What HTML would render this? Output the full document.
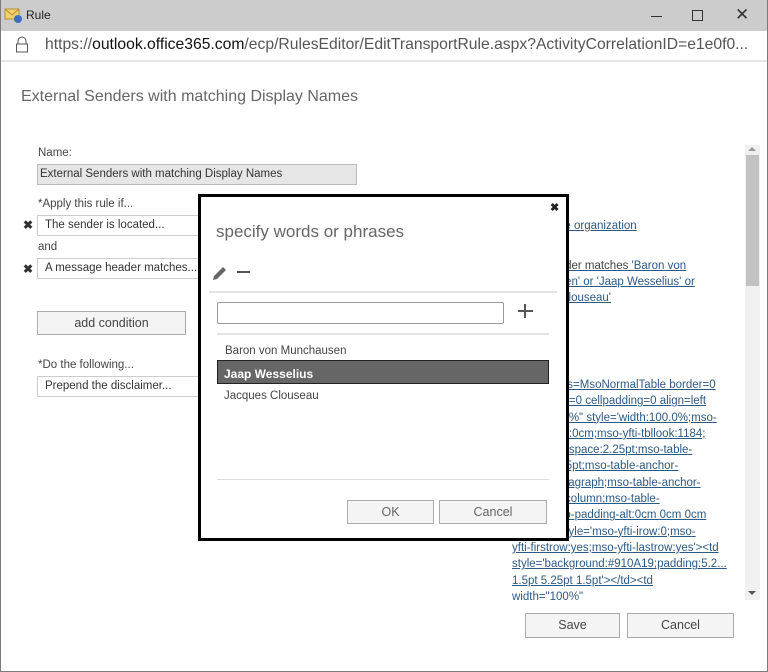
<!DOCTYPE html>
<html><head><meta charset="utf-8"><style>
*{margin:0;padding:0;box-sizing:border-box}
body{width:768px;height:672px;overflow:hidden;background:#fff;font-family:"Liberation Sans",sans-serif;position:relative}
.a{position:absolute}
.win{left:0;top:0;width:768px;height:672px;border:1px solid #7a7a7a;border-top:none}
.tb{left:0;top:0;width:768px;height:31px;background:#cccccc}
.lbl{font-size:11.5px;color:#444}
.box{border:1px solid #ccc;background:#fff;font-size:11.5px;color:#333;padding-left:7px;line-height:19px;height:21px}
.btn{border:1px solid #aaa;background:#f4f4f4;font-size:12.5px;color:#444;text-align:center}
.lnk{font-size:11.5px;color:#2d5985;text-decoration:underline;white-space:nowrap;line-height:16.3px}
.sep{height:2px;background:#e4e4e4}
</style></head><body>
<div class="a tb"></div>
<svg class="a" style="left:4px;top:6px" width="20" height="18" viewBox="0 0 20 18"><rect x="1" y="3" width="14" height="10" fill="#f0d070" stroke="#b89030"/><path d="M1 3l7 6 7-6" fill="none" stroke="#b89030"/><circle cx="14" cy="13" r="4" fill="#3a6fc0"/></svg>
<div class="a" style="left:26px;top:8px;font-size:12px;color:#222">Rule</div>
<div class="a" style="left:651px;top:16px;width:11px;height:1px;background:#333"></div>
<div class="a" style="left:692px;top:10px;width:11px;height:11px;border:1px solid #333"></div>
<div class="a" style="left:735px;top:5px;font-size:17px;color:#333">✕</div>
<svg class="a" style="left:15px;top:36px" width="14" height="18" viewBox="0 0 14 18"><path d="M3 8V5a4 4 0 0 1 8 0v3" fill="none" stroke="#555"/><rect x="1.5" y="8" width="11" height="8" fill="none" stroke="#555"/></svg>
<div class="a" style="left:45px;top:36px;font-size:15.7px;color:#555;white-space:nowrap">https://<span style="color:#111">outlook.office365.com</span>/ecp/RulesEditor/EditTransportRule.aspx?ActivityCorrelationID=e1e0f0...</div>
<div class="a" style="left:0;top:60px;width:768px;height:2px;background:#e6e6e6"></div>
<div class="a" style="left:21px;top:88px;font-size:16px;color:#666">External Senders with matching Display Names</div>
<div class="a lbl" style="left:38px;top:147px">Name:</div>
<div class="a box" style="left:37px;top:164px;width:320px;background:#e6e6e6;border-color:#bbb;padding-left:2px">External Senders with matching Display Names</div>
<div class="a lbl" style="left:38px;top:198px">*Apply this rule if...</div>
<div class="a" style="left:23px;top:218px;font-size:12px;font-weight:bold;color:#333">✖</div>
<div class="a box" style="left:37px;top:215px;width:200px">The sender is located...</div>
<div class="a lbl" style="left:38px;top:241px">and</div>
<div class="a" style="left:23px;top:262px;font-size:12px;font-weight:bold;color:#333">✖</div>
<div class="a box" style="left:37px;top:258px;width:200px">A message header matches...</div>
<div class="a btn" style="left:37px;top:311px;width:149px;height:24px;line-height:22px">add condition</div>
<div class="a lbl" style="left:38px;top:359px">*Do the following...</div>
<div class="a box" style="left:37px;top:376px;width:200px">Prepend the disclaimer...</div>
<div class="a lnk" style="left:512px;top:218px">Outside the organization</div>
<div class="a lnk" style="left:512px;top:258px"><span style="color:#444;text-decoration:none">ssage header matches </span>'Baron von</div>
<div class="a lnk" style="left:512px;top:274px">Munchausen' or 'Jaap Wesselius' or</div>
<div class="a lnk" style="left:512px;top:290px">'Jacques Clouseau'</div>
<div class="a" style="left:512px;top:377px;width:232px;height:223px;overflow:hidden">
<div class="lnk">&lt;table class=MsoNormalTable border=0</div>
<div class="lnk">cellspacing=0 cellpadding=0 align=left</div>
<div class="lnk">width="100%" style='width:100.0%;mso-</div>
<div class="lnk">cellspacing:0cm;mso-yfti-tbllook:1184;</div>
<div class="lnk">mso-table-lspace:2.25pt;mso-table-</div>
<div class="lnk">rspace:2.25pt;mso-table-anchor-</div>
<div class="lnk">vertical:paragraph;mso-table-anchor-</div>
<div class="lnk">horizontal:column;mso-table-</div>
<div class="lnk">left:left;mso-padding-alt:0cm 0cm 0cm</div>
<div class="lnk">0cm'&gt;&lt;tr style='mso-yfti-irow:0;mso-</div>
<div class="lnk">yfti-firstrow:yes;mso-yfti-lastrow:yes'&gt;&lt;td</div>
<div class="lnk">style='background:#910A19;padding:5.2...</div>
<div class="lnk">1.5pt 5.25pt 1.5pt'&gt;&lt;/td&gt;&lt;td</div>
<div class="lnk">width="100%"</div>
<div class="lnk">style='width:100.0%;background:#FDF2...</div>
</div>
<div class="a" style="left:745px;top:145px;width:15px;height:455px;background:#f0f0f0"></div>
<div class="a" style="left:746px;top:155px;width:13px;height:131px;background:#c2c2c2"></div>
<div class="a" style="left:748px;top:147px;width:0;height:0;border-left:4px solid transparent;border-right:4px solid transparent;border-bottom:4px solid #999"></div>
<div class="a" style="left:748px;top:591px;width:0;height:0;border-left:4px solid transparent;border-right:4px solid transparent;border-top:4px solid #555"></div>
<div class="a btn" style="left:525px;top:613px;width:95px;height:25px;line-height:23px">Save</div>
<div class="a btn" style="left:627px;top:613px;width:107px;height:25px;line-height:23px">Cancel</div>
<!-- dialog -->
<div class="a" style="left:198px;top:194px;width:371px;height:347px;border:3px solid #000;background:#fff"></div>
<div class="a" style="left:550px;top:201px;font-size:11px;font-weight:bold;color:#222">✖</div>
<div class="a" style="left:216px;top:222px;font-size:17px;color:#666">specify words or phrases</div>
<svg class="a" style="left:211px;top:264px" width="18" height="18" viewBox="0 0 18 18"><path d="M2 16l1-4 9-9 3 3-9 9z" fill="#666"/></svg>
<div class="a" style="left:237px;top:271px;width:13px;height:2px;background:#555"></div>
<div class="a sep" style="left:209px;top:291px;width:348px"></div>
<div class="a" style="left:217px;top:302px;width:287px;height:22px;border:1px solid #999;border-radius:2px"></div>
<div class="a" style="left:518px;top:310px;width:15px;height:2px;background:#555"></div>
<div class="a" style="left:524px;top:304px;width:2px;height:14px;background:#555"></div>
<div class="a sep" style="left:217px;top:333px;width:332px"></div>
<div class="a" style="left:225px;top:345px;font-size:11.5px;color:#444">Baron von Munchausen</div>
<div class="a" style="left:217px;top:360px;width:332px;height:24px;background:#666;border:1px solid #222"></div>
<div class="a" style="left:224px;top:367px;font-size:12px;font-weight:bold;color:#fff">Jaap Wesselius</div>
<div class="a" style="left:224px;top:390px;font-size:11.5px;color:#444">Jacques Clouseau</div>
<div class="a" style="left:217px;top:479px;width:332px;height:1px;background:#ddd"></div>
<div class="a btn" style="left:347px;top:500px;width:87px;height:24px;line-height:22px;color:#666">OK</div>
<div class="a btn" style="left:439px;top:500px;width:108px;height:24px;line-height:22px;color:#666">Cancel</div>
<div class="a win"></div>
</body></html>
